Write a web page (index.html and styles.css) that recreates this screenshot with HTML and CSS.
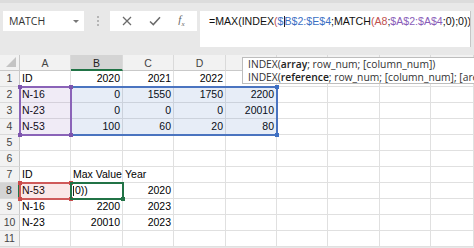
FILE: index.html
```html
<!DOCTYPE html>
<html>
    <head>
        <meta charset="utf-8" />
        <title>INDEX / MATCH</title>
        <link rel="stylesheet" href="styles.css">
    </head>
    <body>
        <div class="toolbar">
            <div class="namebox">
                <span>MATCH</span>
                <span class="drop"></span>
            </div>
            <div class="grip"><i></i><i></i><i></i></div>
            <div class="buttons">
                <svg class="icon" width="10" height="10" viewBox="0 0 10 10"><path d="M1 1L9 9M9 1L1 9" stroke="#6b6b6b" stroke-width="1.3" fill="none"/></svg>
                <svg class="icon" width="12" height="10" viewBox="0 0 12 10"><path d="M1 5.5L4.3 8.6L11 1.2" stroke="#6b6b6b" stroke-width="1.5" fill="none"/></svg>
                <span class="fx"><i>f</i><sub>x</sub></span>
            </div>
            <div class="formula">=MAX(INDEX<span class="paren">(</span><span class="ref-blue">$<i class="caret"></i>B$2:$E$4</span>;MATCH<span class="paren">(</span><span class="ref-red">A8</span>;<span class="ref-purple">$A$2:$A$4</span>;0);0))</div>
        </div>

        <div class="sheet">
            <div class="corner"><span></span></div>
            <div class="hd">A</div><div class="hd active">B</div><div class="hd">C</div><div class="hd">D</div><div class="hd"></div><div class="hd"></div><div class="hd"></div><div class="hd"></div><div class="hd"></div>

            <div class="rh">1</div><div class="c">ID</div><div class="c n">2020</div><div class="c n">2021</div><div class="c n">2022</div><div class="c"></div><div class="c"></div><div class="c"></div><div class="c"></div><div class="c"></div>
            <div class="rh">2</div><div class="c">N-16</div><div class="c n">0</div><div class="c n">1550</div><div class="c n">1750</div><div class="c n">2200</div><div class="c"></div><div class="c"></div><div class="c"></div><div class="c"></div>
            <div class="rh">3</div><div class="c">N-23</div><div class="c n">0</div><div class="c n">0</div><div class="c n">0</div><div class="c n">20010</div><div class="c"></div><div class="c"></div><div class="c"></div><div class="c"></div>
            <div class="rh">4</div><div class="c">N-53</div><div class="c n">100</div><div class="c n">60</div><div class="c n">20</div><div class="c n">80</div><div class="c"></div><div class="c"></div><div class="c"></div><div class="c"></div>
            <div class="rh">5</div><div class="c"></div><div class="c"></div><div class="c"></div><div class="c"></div><div class="c"></div><div class="c"></div><div class="c"></div><div class="c"></div><div class="c"></div>
            <div class="rh">6</div><div class="c"></div><div class="c"></div><div class="c"></div><div class="c"></div><div class="c"></div><div class="c"></div><div class="c"></div><div class="c"></div><div class="c"></div>
            <div class="rh">7</div><div class="c">ID</div><div class="c">Max Value</div><div class="c">Year</div><div class="c"></div><div class="c"></div><div class="c"></div><div class="c"></div><div class="c"></div><div class="c"></div>
            <div class="rh active">8</div><div class="c">N-53</div><div class="c edit"><i class="caret"></i>0))</div><div class="c n">2020</div><div class="c"></div><div class="c"></div><div class="c"></div><div class="c"></div><div class="c"></div><div class="c"></div>
            <div class="rh">9</div><div class="c">N-16</div><div class="c n">2200</div><div class="c n">2023</div><div class="c"></div><div class="c"></div><div class="c"></div><div class="c"></div><div class="c"></div><div class="c"></div>
            <div class="rh">10</div><div class="c">N-23</div><div class="c n">20010</div><div class="c n">2023</div><div class="c"></div><div class="c"></div><div class="c"></div><div class="c"></div><div class="c"></div><div class="c"></div>
            <div class="rh">11</div><div class="c"></div><div class="c"></div><div class="c"></div><div class="c"></div><div class="c"></div><div class="c"></div><div class="c"></div><div class="c"></div><div class="c"></div>

            <!-- reference highlights drawn over the grid -->
            <div class="range blue"><b class="h tr"></b><b class="h br"></b></div>
            <div class="range purple"><b class="h tl"></b><b class="h tr"></b><b class="h bl"></b><b class="h br"></b></div>
            <div class="range red"><b class="h tl"></b><b class="h tr"></b><b class="h bl"></b><b class="h br"></b></div>
            <div class="range green"><b class="h br"></b></div>

            <div class="tip">
                <div>INDEX(<b>array</b>; row_num; [column_num])</div>
                <div>INDEX(<b>reference</b>; row_num; [column_num]; [area_num])</div>
            </div>
        </div>
    </body>
</html>
```

FILE: styles.css
```css
html, body {
    margin: 0;
    padding: 0;
}

body {
    width: 474px;
    height: 248px;
    overflow: hidden;
    background: #e8e8e8;
    font-family: "Liberation Sans", Arial, sans-serif;
}

/* formula bar */
.toolbar {
    height: 55px;
    box-sizing: border-box;
    padding: 11px 0 0 3px;
    border-top: 3px solid #dcdcdc;
    display: flex;
    align-items: flex-start;
}

.namebox {
    width: 81px;
    height: 20px;
    margin-top: -3px;
    background: #fff;
    display: flex;
    align-items: center;
    justify-content: space-between;
    padding: 0 5px 0 6px;
    box-sizing: border-box;
    font-family: "Open Sans", sans-serif;
    font-size: 10.5px;
    color: #333;
}

.drop {
    width: 0;
    height: 0;
    border-left: 3px solid transparent;
    border-right: 3px solid transparent;
    border-top: 3px solid #777;
}

.grip {
    margin: 2px 0 0 13px;
    display: flex;
    flex-direction: column;
    gap: 2px;
}

.grip i {
    width: 2px;
    height: 2px;
    background: #b5b5b5;
}

.buttons {
    width: 87px;
    height: 20px;
    margin: -3px 0 0 11px;
    background: #fff;
    display: flex;
    align-items: center;
    justify-content: space-around;
    padding: 0 4px;
    box-sizing: border-box;
}

.fx {
    font-family: "Liberation Serif", serif;
    font-size: 11px;
    color: #666;
}

.fx sub {
    font-size: 7px;
    font-style: italic;
}

.formula {
    width: 271px;
    height: 36px;
    margin: -3px 0 0 3px;
    background: #fff;
    border-right: 1px solid #c6c6c6;
    box-sizing: border-box;
    padding: 4px 0 0 9px;
    font-size: 10.6px;
    white-space: nowrap;
    overflow: hidden;
    color: #111;
}

.paren, .ref-red { color: #c0504d; }
.ref-blue { color: #3c6fc4; }
.ref-purple { color: #8a5cb8; }

.caret {
    display: inline-block;
    width: 1px;
    height: 11px;
    background: #222;
    vertical-align: -2px;
}

/* grid */
.sheet {
    position: relative;
    display: grid;
    grid-template-columns: 20px 51px 52px 51px 52px 51px 51px 52px 51px 43px;
    grid-auto-rows: 16px;
    width: 474px;
    background: #fff;
    font-size: 10.5px;
}

.corner, .hd, .rh {
    background: #f2f2f2;
    color: #444;
    box-sizing: border-box;
    line-height: 15px;
}

.corner {
    position: relative;
    border-right: 1px solid #c9c9c9;
    border-bottom: 1px solid #c9c9c9;
}

.corner span {
    position: absolute;
    right: 3px;
    bottom: 3px;
    width: 0;
    height: 0;
    border-left: 10px solid transparent;
    border-bottom: 10px solid #c4c4c4;
}

.hd {
    text-align: center;
    border-right: 1px solid #dadada;
    border-bottom: 1px solid #c9c9c9;
    padding-top: 1px;
}

.hd.active {
    background: #d4d4d4;
    border-bottom: 2px solid #217346;
    color: #222;
}

.rh {
    text-align: center;
    border-right: 1px solid #c9c9c9;
    border-bottom: 1px solid #dadada;
}

.rh.active {
    background: #d4d4d4;
    border-right: 2px solid #217346;
    color: #222;
}

.c {
    box-sizing: border-box;
    border-right: 1px solid #e0e0e0;
    border-bottom: 1px solid #e0e0e0;
    padding: 0 2px;
    line-height: 15px;
    white-space: nowrap;
    overflow: hidden;
    color: #000;
}

.n {
    text-align: right;
}

.edit .caret {
    height: 10px;
    margin-right: 1px;
}

/* reference highlights */
.range {
    position: absolute;
    box-sizing: border-box;
    border: 2px solid;
}

.range.blue {
    left: 70px;
    top: 31px;
    width: 208px;
    height: 50px;
    border-color: #4a74c0;
    background: rgba(68, 114, 196, 0.13);
}

.range.purple {
    left: 19px;
    top: 31px;
    width: 53px;
    height: 50px;
    border-color: #8a63b8;
    background: rgba(138, 99, 184, 0.13);
    z-index: 1;
}

.range.red {
    left: 19px;
    top: 127px;
    width: 53px;
    height: 18px;
    border-color: #cf5a5a;
    background: rgba(220, 80, 80, 0.13);
}

.range.green {
    left: 70px;
    top: 127px;
    width: 54px;
    height: 18px;
    border-color: #217346;
}

.h {
    position: absolute;
    width: 4px;
    height: 4px;
}

.blue .h { background: #3c6fc4; }
.purple .h { background: #7d55ad; }
.red .h { background: #c94b4b; }
.green .h { background: #217346; }

.h.tl { left: -3px; top: -3px; }
.h.tr { right: -3px; top: -3px; }
.h.bl { left: -3px; bottom: -3px; }
.h.br { right: -3px; bottom: -3px; }

/* function tooltip */
.tip {
    position: absolute;
    left: 242px;
    top: 2px;
    width: 232px;
    height: 27px;
    box-sizing: border-box;
    padding: 0 0 0 5px;
    background: #fff;
    border: 1px solid #bdbdbd;
    border-right: 0;
    font-family: "Open Sans", sans-serif;
    font-size: 10.3px;
    line-height: 13px;
    color: #333;
    white-space: nowrap;
    overflow: hidden;
    z-index: 2;
}

.tip b {
    font-weight: 600;
    color: #222;
}
```
